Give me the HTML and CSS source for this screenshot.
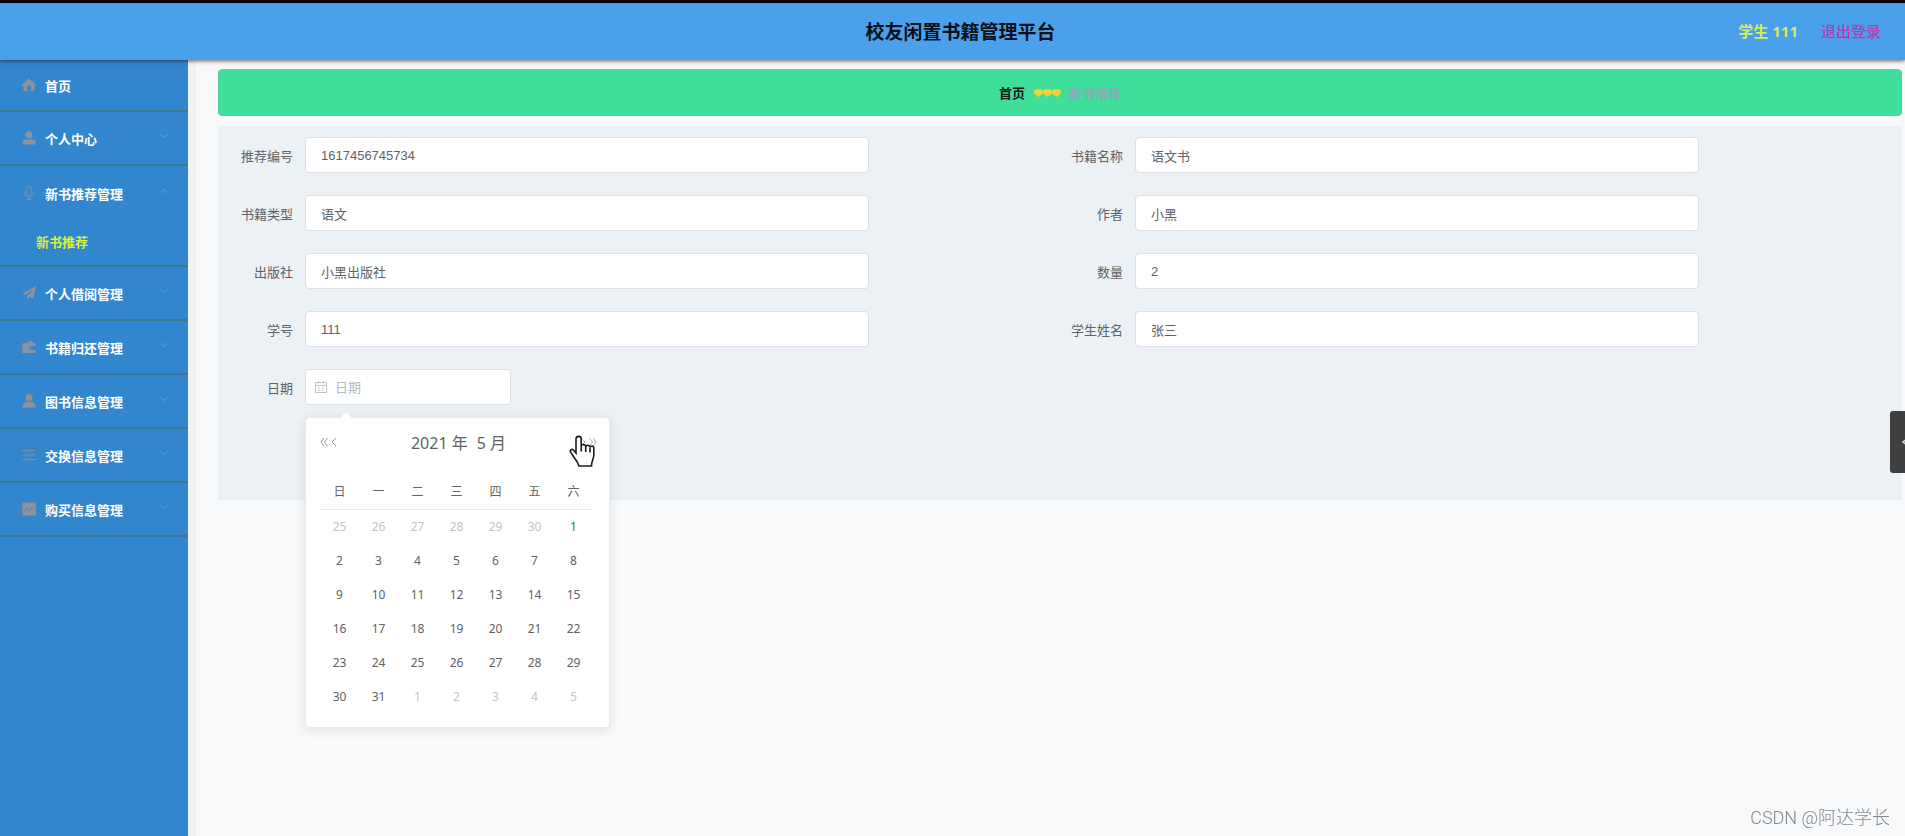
FILE: index.html
```html
<!DOCTYPE html>
<html lang="zh-CN">
<head>
    <meta charset="UTF-8">
    <meta name="viewport" content="width=device-width, initial-scale=1.0">
    <title>校友闲置书籍管理平台</title>
    <link rel="stylesheet" href="styles.css">
</head>
<body>
    <!-- Header -->
    <header class="header">
        <h1 class="header-title">校友闲置书籍管理平台</h1>
        <div class="header-user">
            <span class="user-name">学生 111</span>
            <a class="logout" href="#">退出登录</a>
        </div>
    </header>

    <div class="main">
        <!-- Sidebar -->
        <nav class="sidebar">
            <a class="menu-item menu-home" href="#">
                <svg class="menu-icon" viewBox="0 0 14 14"><path d="M7 0.5L0.3 6.6V8H1.5V13H5.2V9a1.8 1.8 0 0 1 3.6 0V13H12.5V8H13.7V6.6z"/></svg>
                <span>首页</span>
            </a>
            <a class="menu-item" href="#">
                <svg class="menu-icon" viewBox="0 0 14 14"><circle cx="7" cy="3.7" r="3.5"/><path d="M0.5 13.5V11a2.6 2.6 0 0 1 2.6-2.6h7.8A2.6 2.6 0 0 1 13.5 11V13.5z"/></svg>
                <span>个人中心</span>
                <svg class="menu-arrow" viewBox="0 0 10 6"><path d="M1 1l4 4 4-4"/></svg>
            </a>
            <div class="menu-group">
                <a class="menu-item" href="#">
                    <svg class="menu-icon line" viewBox="0 0 14 14"><rect x="4.3" y="0.6" width="5.4" height="9" rx="2.7"/><path d="M2.2 5.5V7.2a4.8 4.3 0 0 0 9.6 0V5.5M7 11.5V13.5M4.5 13.5H9.5"/></svg>
                    <span>新书推荐管理</span>
                    <svg class="menu-arrow" viewBox="0 0 10 6"><path d="M1 5l4-4 4 4"/></svg>
                </a>
                <a class="menu-sub" href="#">新书推荐</a>
            </div>
            <a class="menu-item" href="#">
                <svg class="menu-icon" viewBox="0 0 14 14"><path d="M14 0.3L0.3 7.3L3.5 8.9L11.3 3.2L5.2 9.7V13.6L7.3 10.8L11.2 12.5z"/></svg>
                <span>个人借阅管理</span>
                <svg class="menu-arrow" viewBox="0 0 10 6"><path d="M1 1l4 4 4-4"/></svg>
            </a>
            <a class="menu-item" href="#">
                <svg class="menu-icon" viewBox="0 0 14 14"><path d="M0.3 3.2H4.5L9.3 0.3L11.5 3.2H13.7V6H9.3a2 2 0 0 0 0 4.2H13.7V13H0.3z"/><circle cx="9.8" cy="8.1" r="1"/></svg>
                <span>书籍归还管理</span>
                <svg class="menu-arrow" viewBox="0 0 10 6"><path d="M1 1l4 4 4-4"/></svg>
            </a>
            <a class="menu-item" href="#">
                <svg class="menu-icon" viewBox="0 0 14 14"><circle cx="7" cy="3.6" r="3.5"/><path d="M0.3 13.6C0.3 10.3 2.3 8.6 4.3 7.4L7 8.6L9.7 7.4C11.7 8.6 13.7 10.3 13.7 13.6z"/></svg>
                <span>图书信息管理</span>
                <svg class="menu-arrow" viewBox="0 0 10 6"><path d="M1 1l4 4 4-4"/></svg>
            </a>
            <a class="menu-item" href="#">
                <svg class="menu-icon line" viewBox="0 0 14 14"><path d="M0.3 2.5H3M6 2.5H13.7M0.3 7H8M11 7H13.7M0.3 11.5H4M7 11.5H13.7"/><circle cx="4.5" cy="2.5" r="1.4"/><circle cx="9.5" cy="7" r="1.4"/><circle cx="5.5" cy="11.5" r="1.4"/></svg>
                <span>交换信息管理</span>
                <svg class="menu-arrow" viewBox="0 0 10 6"><path d="M1 1l4 4 4-4"/></svg>
            </a>
            <a class="menu-item" href="#">
                <svg class="menu-icon" viewBox="0 0 14 14"><path d="M0.3 0.5H13.7V13.5H0.3z"/><path class="icon-cut" d="M2.5 9.5L5.3 6.3L7.8 8.5L11.5 4.5"/></svg>
                <span>购买信息管理</span>
                <svg class="menu-arrow" viewBox="0 0 10 6"><path d="M1 1l4 4 4-4"/></svg>
            </a>
        </nav>

        <!-- Content -->
        <main class="content">
            <div class="breadcrumb">
                <a class="crumb-home" href="#">首页</a>
                <svg class="hearts" viewBox="0 0 27 8">
                    <path d="M4.5 8L0.6 5C-1 2 1-0.8 4.5 0.8C8-0.8 10 2 8.4 5z"/>
                    <path d="M13.5 8L9.6 5C8 2 10-0.8 13.5 0.8C17-0.8 19 2 17.4 5z"/>
                    <path d="M22.5 8L18.6 5C17 2 19-0.8 22.5 0.8C26-0.8 28 2 26.4 5z"/>
                </svg>
                <span class="crumb-current">新书推荐</span>
            </div>

            <form class="form">
                <div class="field">
                    <label for="code">推荐编号</label>
                    <input type="text" id="code" value="1617456745734">
                </div>
                <div class="field">
                    <label for="bookName">书籍名称</label>
                    <input type="text" id="bookName" value="语文书">
                </div>
                <div class="field">
                    <label for="bookType">书籍类型</label>
                    <input type="text" id="bookType" value="语文">
                </div>
                <div class="field">
                    <label for="author">作者</label>
                    <input type="text" id="author" value="小黑">
                </div>
                <div class="field">
                    <label for="publisher">出版社</label>
                    <input type="text" id="publisher" value="小黑出版社">
                </div>
                <div class="field">
                    <label for="amount">数量</label>
                    <input type="text" id="amount" value="2">
                </div>
                <div class="field">
                    <label for="studentNo">学号</label>
                    <input type="text" id="studentNo" value="111">
                </div>
                <div class="field">
                    <label for="studentName">学生姓名</label>
                    <input type="text" id="studentName" value="张三">
                </div>
                <div class="field">
                    <label for="date">日期</label>
                    <div class="date-box">
                        <input type="text" id="date" placeholder="日期">
                        <svg class="date-icon" viewBox="0 0 12 12"><path d="M0.5 1.5H11.5V11.5H0.5zM0.5 4.5H11.5M3.5 0V2.5M8.5 0V2.5M3 7H5M7 7H9M3 9.3H5M7 9.3H9"/></svg>

                        <!-- Date picker -->
                        <div class="picker">
                            <div class="picker-header">
                                <button type="button" class="picker-btn" aria-label="前一年"><svg width="8" height="10" viewBox="0 0 8 10"><path d="M4 1L1 5l3 4M7.5 1l-3 4 3 4"/></svg></button>
                                <button type="button" class="picker-btn" aria-label="上个月"><svg width="6" height="10" viewBox="0 0 6 10"><path d="M5 1L1 5l4 4"/></svg></button>
                                <div class="picker-title"><span>2021 年</span><span>5 月</span></div>
                                <button type="button" class="picker-btn next" aria-label="下个月"><svg width="6" height="10" viewBox="0 0 6 10"><path d="M1 1l4 4-4 4"/></svg></button>
                                <button type="button" class="picker-btn next" aria-label="后一年"><svg width="8" height="10" viewBox="0 0 8 10"><path d="M0.5 1l3 4-3 4M4 1l3 4-3 4"/></svg></button>
                                <svg class="cursor" viewBox="0 0 26 33"><path d="M7 18V4a2.6 2.6 0 0 1 5.2 0V11a2.4 2.4 0 0 1 4.6 0.6a2.2 2.2 0 0 1 4.2 0.9a2 2 0 0 1 3.8 1.3V20C24.8 24 22.5 26 22.5 31H10C9 27 6 24 4.2 21L1.6 17.2C0.4 14.8 3 13.6 4.6 15.2z"/><path d="M12.2 11V16.5M16.7 11.8V17M21 13V17.5"/></svg>
                            </div>
                            <table class="calendar">
                                <thead>
                                    <tr><th>日</th><th>一</th><th>二</th><th>三</th><th>四</th><th>五</th><th>六</th></tr>
                                </thead>
                                <tbody>
                                    <tr><td class="other">25</td><td class="other">26</td><td class="other">27</td><td class="other">28</td><td class="other">29</td><td class="other">30</td><td>1</td></tr>
                                    <tr><td>2</td><td>3</td><td>4</td><td>5</td><td>6</td><td>7</td><td>8</td></tr>
                                    <tr><td>9</td><td>10</td><td>11</td><td>12</td><td>13</td><td>14</td><td>15</td></tr>
                                    <tr><td>16</td><td>17</td><td>18</td><td>19</td><td>20</td><td>21</td><td>22</td></tr>
                                    <tr><td>23</td><td>24</td><td>25</td><td>26</td><td>27</td><td>28</td><td>29</td></tr>
                                    <tr><td>30</td><td>31</td><td class="other">1</td><td class="other">2</td><td class="other">3</td><td class="other">4</td><td class="other">5</td></tr>
                                </tbody>
                            </table>
                        </div>
                    </div>
                </div>
            </form>
        </main>
    </div>

    <button type="button" class="side-tab" aria-label="展开"><svg width="8" height="10" viewBox="0 0 8 10"><path d="M7 1L2 5l5 4"/></svg></button>
    <div class="watermark">CSDN @阿达学长</div>
</body>
</html>
```
FILE: styles.css
```css
* {
    box-sizing: border-box;
}
body {
    margin: 0;
    min-height: 100vh;
    display: flex;
    flex-direction: column;
    background: #f7f9fb;
    border-top: 3px solid #000;
    color: #606266;
    font-family: "Liberation Sans", "Noto Sans CJK SC", sans-serif;
    font-size: 13px;
}
a {
    text-decoration: none;
}

/* Header */
.header {
    position: relative;
    display: flex;
    align-items: center;
    justify-content: flex-end;
    height: 57px;
    padding: 0 24px 2px;
    background: #4aa0ea;
    box-shadow: 0 1px 4px rgba(60, 20, 30, 0.7);
    font-family: "Noto Sans", "Noto Sans CJK SC", sans-serif;
    z-index: 1;
}
.header-title {
    position: absolute;
    left: 0;
    right: 0;
    margin: 0 0 0 16px;
    text-align: center;
    color: #0a0f1c;
    font-size: 19px;
    font-weight: 600;
    pointer-events: none;
}
.header-user {
    display: flex;
    gap: 23px;
    font-size: 15px;
}
.user-name {
    color: #d6ec5c;
    font-weight: bold;
}
.logout {
    color: #b03fb0;
    font-weight: 500;
}

/* Sidebar */
.main {
    flex: 1;
    display: flex;
}
.sidebar {
    width: 188px;
    flex-shrink: 0;
    background: #3186cd;
}
.menu-item {
    display: flex;
    align-items: center;
    height: 54px;
    padding: 0 20px 0 22px;
    border-bottom: 2px solid #3a7a8a;
    color: #fff;
    font-weight: bold;
}
.menu-home {
    height: 52px;
}
.menu-icon {
    width: 14px;
    height: 14px;
    margin-right: 9px;
    fill: #8e939b;
}
.menu-icon.line {
    fill: none;
    stroke: #8391a0;
}
.icon-cut {
    fill: none;
    stroke: #3186cd;
}
.menu-arrow {
    width: 9px;
    height: 6px;
    margin: 0 0 4px auto;
    fill: none;
    stroke: #78a2c6;
}
.menu-group {
    border-bottom: 2px solid #3a7a8a;
}
.menu-group .menu-item {
    border-bottom: 0;
}
.menu-sub {
    display: block;
    height: 45px;
    padding-left: 36px;
    color: #d8f03c;
    font-weight: bold;
    line-height: 45px;
}

/* Content */
.content {
    flex: 1;
    min-width: 0;
    padding: 9px 3px 0 22px;
    border-left: 8px solid #f2f2f4;
}
.breadcrumb {
    display: flex;
    align-items: center;
    justify-content: center;
    height: 47px;
    margin-bottom: 10px;
    background: #3fde9b;
    border: 1px solid #55cfa0;
    border-radius: 4px;
}
.crumb-home {
    color: #0c1c14;
    font-weight: bold;
}
.hearts {
    width: 27px;
    height: 8px;
    margin: 0 8px 0 9px;
    fill: #f3d235;
}
.crumb-current {
    color: #8aabb9;
    font-weight: bold;
}

/* Form */
.form {
    display: grid;
    grid-template-columns: 1fr 1fr;
    row-gap: 22px;
    padding: 11px 12px 95px;
    background: #ebf1f5;
}
.field {
    display: flex;
    align-items: center;
}
.field label {
    width: 75px;
    padding-right: 12px;
    text-align: right;
}
.field input {
    width: 68%;
    height: 36px;
    padding: 0 15px;
    background: #fff;
    border: 1px solid #dcdfe6;
    border-radius: 4px;
    color: #606266;
    font: inherit;
}
.date-box {
    position: relative;
    width: 206px;
}
.field .date-box input {
    width: 100%;
    padding-left: 29px;
}
.date-box input::placeholder {
    color: #b4b8c4;
}
.date-icon {
    position: absolute;
    left: 10px;
    top: 12px;
    width: 12px;
    height: 12px;
    fill: none;
    stroke: #c0c4cc;
}

/* Date picker */
.picker {
    position: absolute;
    left: 0;
    top: 48px;
    width: 305px;
    padding: 10px 16px 14px 14px;
    background: #fff;
    border: 1px solid #e8ebf0;
    border-radius: 4px;
    box-shadow: 0 2px 12px rgba(0, 0, 0, 0.1);
    font-family: "Noto Sans", "Noto Sans CJK SC", sans-serif;
    z-index: 2;
}
.picker::before {
    content: "";
    position: absolute;
    left: 34px;
    top: -6px;
    border: 6px solid transparent;
    border-top: 0;
    border-bottom-color: #fff;
}
.picker-header {
    position: relative;
    display: flex;
    align-items: center;
    gap: 3px;
    height: 28px;
}
.picker-btn {
    display: flex;
    padding: 0;
    background: none;
    border: 0;
    cursor: pointer;
}
.picker-btn svg {
    fill: none;
    stroke: #909399;
}
.picker-btn.next svg {
    stroke: #b0b4bc;
}
.picker-btn:last-of-type {
    margin-right: -4px;
}
.picker-title {
    flex: 1;
    display: flex;
    justify-content: center;
    gap: 9px;
    font-size: 16px;
}
.cursor {
    position: absolute;
    right: -2px;
    top: 7px;
    width: 26px;
    height: 33px;
    fill: #fff;
    stroke: #1c1c1c;
    stroke-width: 1.6;
}
.calendar {
    width: 100%;
    margin-top: 17px;
    border-collapse: collapse;
    table-layout: fixed;
    font-size: 12px;
    text-align: center;
}
.calendar th {
    height: 36px;
    padding: 0;
    border-bottom: 1px solid #e4e7ed;
    font-weight: 400;
}
.calendar td {
    height: 34px;
    padding: 0;
}
.calendar .other {
    color: #c0c4cc;
}

.side-tab {
    position: fixed;
    right: 0;
    top: 411px;
    display: flex;
    align-items: center;
    justify-content: flex-end;
    width: 15px;
    height: 62px;
    padding: 0;
    overflow: hidden;
    background: #3f3f3f;
    border: 0;
    border-radius: 3px 0 0 3px;
}
.side-tab svg {
    flex-shrink: 0;
    margin-right: -4px;
    fill: none;
    stroke: #e0e0e0;
    stroke-width: 1.5;
}
.watermark {
    position: fixed;
    right: 15px;
    bottom: 7px;
    color: #85888b;
    font-family: Roboto, "Noto Sans CJK SC", sans-serif;
    font-size: 18px;
    font-weight: 300;
}
```
